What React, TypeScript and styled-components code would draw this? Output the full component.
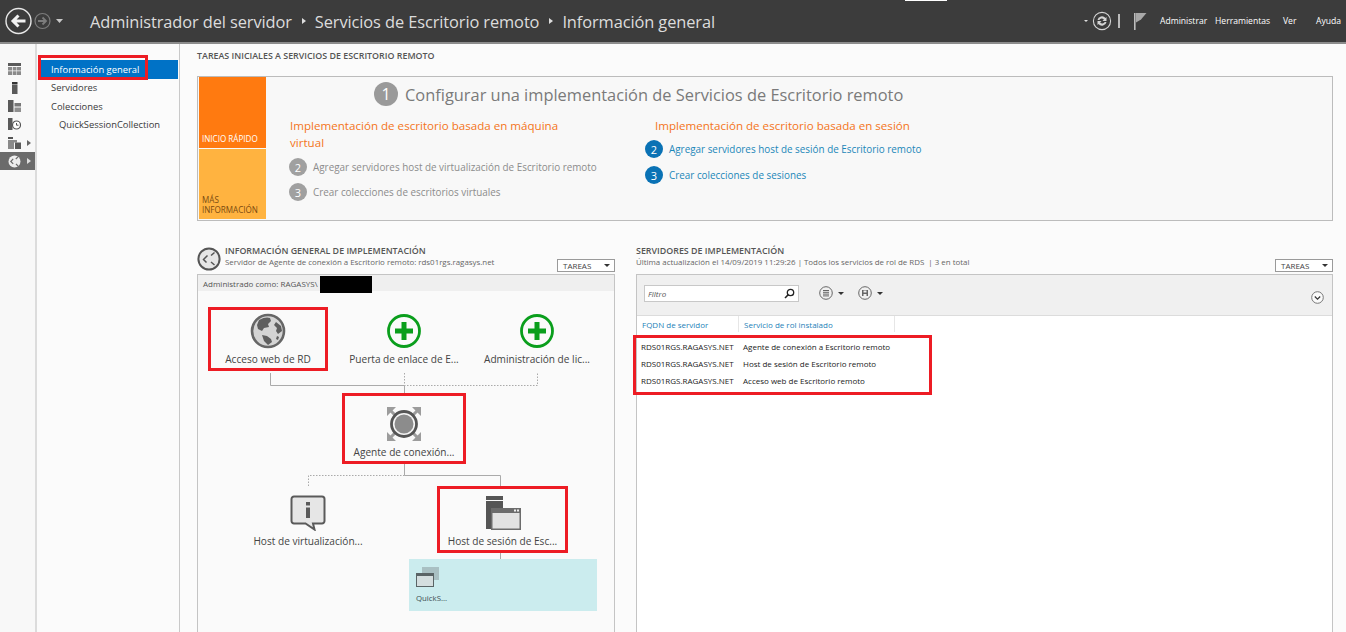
import React from "react";
import styled, { createGlobalStyle } from "styled-components";

const Global = createGlobalStyle`
  html, body { margin: 0; padding: 0; width: 1346px; height: 632px; overflow: hidden; background: #fff; }
  * { box-sizing: border-box; }
  body { font-family: "Open Sans", "Noto Sans", "Liberation Sans", sans-serif; color: #333; }
`;

const Page = styled.div`
  width: 1346px; height: 632px; display: flex; flex-direction: column; overflow: hidden; position: relative;
`;
const Header = styled.header`
  height: 44px; flex: none; background: #3c3c3c; border-bottom: 2px solid #8c8c8c;
  display: flex; align-items: center; color: #fff; position: relative;
`;
const TopNotch = styled.div`
  position: absolute; left: 905px; top: 0; width: 42px; height: 1px; background: #fff;
`;
const NavGroup = styled.div`
  display: flex; align-items: center; width: 90px; flex: none; padding-left: 5px;
`;
const Crumbs = styled.div`
  display: flex; align-items: center; flex: 1; font-size: 16.4px; color: #dcdcdc; letter-spacing: -0.1px; white-space: nowrap;
`;
const CrumbSep = styled.span`
  width: 0; height: 0; border-left: 4px solid #ddd; border-top: 3px solid transparent; border-bottom: 3px solid transparent;
  margin: 0 9px 0 10px;
`;
const HeaderTools = styled.div`
  display: flex; align-items: center; flex: none; width: 262px; height: 100%;
`;
const MenuItem = styled.span<{ $w: number }>`
  font-size: 8.6px; color: #fff; width: ${p => p.$w}px; white-space: nowrap;
`;
const Caret = styled.span<{ $c?: string; $s?: number }>`
  display: inline-block; width: 0; height: 0;
  border-left: ${p => p.$s ?? 4}px solid transparent; border-right: ${p => p.$s ?? 4}px solid transparent;
  border-top: ${p => p.$s ?? 4}px solid ${p => p.$c ?? "#333"};
`;
const Body = styled.div`
  flex: 1; display: flex; min-height: 0; background: #fbfbfb;
`;
const Rail = styled.aside`
  width: 37px; flex: none; background: #f8f8f8; border-right: 2px solid #dcdcdc; padding-top: 16px;
`;
const RailItem = styled.div<{ $active?: boolean; $arrow?: boolean }>`
  height: 18.4px; display: flex; align-items: center; padding-left: 8px; gap: 6px;
  background: ${p => (p.$active ? "#6b6b6b" : "transparent")};
`;
const RailArrow = styled.span<{ $c: string }>`
  width: 0; height: 0; border-left: 4px solid ${p => p.$c}; border-top: 3.5px solid transparent; border-bottom: 3.5px solid transparent;
`;
const SideNav = styled.nav`
  width: 143px; flex: none; background: #fbfbfb; border-right: 1px solid #c9c9c9; padding-top: 16px; font-size: 9.4px; color: #3a3a3a;
`;
const NavItem = styled.div<{ $active?: boolean; $indent?: boolean }>`
  height: 18.5px; display: flex; align-items: center; white-space: nowrap; margin-right: 1px; margin-left: 1px;
  padding-left: ${p => (p.$indent ? "21px" : "13px")};
  background: ${p => (p.$active ? "#0072c6" : "transparent")};
  color: ${p => (p.$active ? "#fff" : "#3a3a3a")};
`;
const NavMark = styled.div`
  position: absolute; left: 38px; top: 55px; width: 110px; height: 25px; border: 3px solid #ed1c24;
`;
const Main = styled.main`
  flex: 1; padding: 6px 13px 0 17px; display: flex; flex-direction: column; min-width: 0; background: #fbfbfb;
`;
const SectionTitle = styled.h2`
  margin: 0; font-size: 8.9px; font-weight: 600; color: #555; line-height: 12px; white-space: nowrap; letter-spacing: 0;
`;
const QuickStart = styled.section`
  margin-top: 14px; height: 145px; border: 1px solid #bcbcbc; background: #f8f8f8; display: flex; flex: none;
`;
const Tiles = styled.div`
  width: 68px; flex: none; display: flex; flex-direction: column; gap: 1px; padding-left: 1px;
`;
const Tile = styled.div<{ $bg: string; $c: string; $h: number }>`
  height: ${p => p.$h}px; background: ${p => p.$bg}; color: ${p => p.$c}; font-size: 8.1px; line-height: 10px;
  display: flex; align-items: flex-end; padding: 0 3px 4px 3px;
`;
const QuickBody = styled.div`
  flex: 1; padding-top: 5px; min-width: 0;
`;
const BigStep = styled.div`
  display: flex; align-items: center; gap: 7px; margin-left: 108px; height: 24px;
  font-size: 16.4px; color: #7a7a7a; white-space: nowrap;
`;
const Bullet = styled.span<{ $bg: string; $size: number; $fs: number }>`
  width: ${p => p.$size}px; height: ${p => p.$size}px; border-radius: 50%; background: ${p => p.$bg}; color: #fff;
  font-size: ${p => p.$fs}px; display: flex; align-items: center; justify-content: center; flex: none;
`;
const Cols = styled.div`
  display: flex; margin-top: 11px; padding-left: 24px;
`;
const Col = styled.div<{ $w: number }>`
  width: ${p => p.$w}px; flex: none;
`;
const ColTitle = styled.div<{ $h?: number }>`
  color: #f47521; font-size: 11.6px; line-height: 17px; height: ${p => p.$h ?? 17}px; width: 300px;
`;
const Step = styled.div<{ $mt: number; $link?: boolean; $ml?: number }>`
  display: flex; align-items: center; gap: 6px; margin-top: ${p => p.$mt}px; margin-left: ${p => p.$ml ?? -1}px; height: 18px;
  font-size: 9.9px; color: ${p => (p.$link ? "#1b87b8" : "#8c8c8c")}; white-space: nowrap;
`;
const Lower = styled.div`
  margin-top: 23px; display: grid; grid-template-columns: 418px 697px; column-gap: 21px; flex: 1; min-height: 0;
`;
const Panel = styled.section`
  display: flex; flex-direction: column; min-height: 0;
`;
const PanelHead = styled.div`
  height: 30px; flex: none; display: flex; align-items: flex-start; position: relative;
`;
const HeadIcon = styled.div`
  width: 28px; flex: none; padding-top: 3px;
`;
const HeadText = styled.div`
  flex: 1; padding-top: 1px;
`;
const Sub = styled.div`
  font-size: 7.9px; line-height: 11px; color: #666; white-space: nowrap;
`;
const TaskButton = styled.div`
  position: absolute; right: 0; top: 15px; width: 58px; height: 13px; border: 1px solid #9a9a9a; background: #fff;
  font-size: 8px; color: #444; display: flex; align-items: center; justify-content: space-between; padding: 0 4px 0 5px;
`;
const Frame = styled.div`
  flex: 1; border: 1px solid #c4c4c4; border-bottom: none; background: #fafafa; position: relative; min-height: 0;
`;
const ManagedBar = styled.div`
  height: 16px; background: #efefef; font-size: 8px; color: #555; padding-left: 5px; display: flex; align-items: center;
`;
const Redact = styled.div`
  position: absolute; left: 122px; top: 1px; width: 52px; height: 17px; background: #000;
`;
const Connectors = styled.svg`
  position: absolute; left: 0; top: 0;
`;
const Node = styled.div<{ $x: number; $y: number; $w: number; $h: number; $mark?: boolean }>`
  position: absolute; left: ${p => p.$x}px; top: ${p => p.$y}px; width: ${p => p.$w}px; height: ${p => p.$h}px;
  border: 3px solid ${p => (p.$mark ? "#ed1c24" : "transparent")};
  display: flex; flex-direction: column; align-items: center; justify-content: flex-end;
  padding-bottom: 2px; font-size: 10.1px; color: #444; white-space: nowrap;
`;
const NodeIcon = styled.div`
  display: flex; justify-content: center; margin-bottom: 3px;
`;
const CollectionBox = styled.div`
  position: absolute; left: 211px; top: 284px; width: 188px; height: 52px; background: #cbecee; padding: 8px 0 0 7px;
  font-size: 7.8px; color: #3c4d52;
`;
const CollectionLabel = styled.div`
  margin-top: 4px;
`;
const FilterBar = styled.div`
  height: 41px; background: #f0f0f0; border-bottom: 1px solid #dcdcdc; display: flex; align-items: flex-start; padding: 10px 8px 0 7px; position: relative;
`;
const FilterBox = styled.div`
  width: 155px; height: 17px; background: #fff; border: 1px solid #c8c8c8; font-size: 8px; font-style: italic; color: #555;
  display: flex; align-items: center; justify-content: space-between; padding: 0 3px;
`;
const RoundMenu = styled.div<{ $ml: number }>`
  display: flex; align-items: center; gap: 5px; margin-left: ${p => p.$ml}px; margin-top: 1px;
`;
const ExpandBtn = styled.div`
  margin-left: auto; margin-top: 2px;
`;
const TableArea = styled.div`
  flex: 1; background: #fff; height: 100%; position: relative;
`;
const HeadRow = styled.div`
  display: flex; height: 16px; font-size: 8px; color: #1e7fb8; align-items: center;
`;
const HeadCell = styled.div<{ $w: number }>`
  width: ${p => p.$w}px; padding-left: 5px; border-right: 1px solid #e6e6e6; height: 100%; display: flex; align-items: center; white-space: nowrap;
`;
const Rows = styled.div`
  margin-top: 6px; margin-left: 4px; font-size: 8px; color: #222;
`;
const Row = styled.div`
  display: flex; height: 17px; align-items: center; white-space: nowrap;
`;
const FqdnCell = styled.div`
  width: 102px; flex: none;
`;
const RowsMark = styled.div`
  position: absolute; left: -4px; top: 19px; width: 299px; height: 60px; border: 3px solid #ed1c24;
`;

const BackIcon = () => (
  <svg width="62" height="32" viewBox="0 0 62 32">
    <circle cx="13.5" cy="16" r="12.5" fill="none" stroke="#e8e8e8" strokeWidth="1.4" />
    <path d="M20.5 16H9M13.5 10.5 8 16l5.5 5.5" fill="none" stroke="#f2f2f2" strokeWidth="3" />
    <circle cx="37.5" cy="16" r="7.5" fill="none" stroke="#7c7c7c" strokeWidth="1.2" />
    <path d="M33 16h7.5M37.5 12.5 41 16l-3.5 3.5" fill="none" stroke="#7c7c7c" strokeWidth="1.8" />
    <path d="M51 14h7l-3.5 4z" fill="#c8c8c8" />
  </svg>
);
const RefreshIcon = () => (
  <svg width="20" height="20" viewBox="0 0 20 20">
    <circle cx="10" cy="10" r="8.6" fill="none" stroke="#d4d4d4" strokeWidth="1.1" />
    <path d="M5.5 9a4.5 4.5 0 0 1 8-2l1-1v4h-4l1.4-1.4A2.8 2.8 0 0 0 7.3 9zM14.5 11a4.5 4.5 0 0 1-8 2l-1 1v-4h4L8.1 11.400a2.800 2.800 0 0 0 4.600 -.4z" fill="#d4d4d4" />
  </svg>
);
const FlagIcon = () => (
  <svg width="14" height="19" viewBox="0 0 14 19">
    <path d="M1 1h1.600v17H1z" fill="#bdbdbd" />
    <path d="M3 1h10.500L8 7.500l-5 3z" fill="#a8a8a8" />
  </svg>
);

const railColor = "#5a5a5a";
const RailDash = () => (
  <svg width="13" height="12" viewBox="0 0 13 12"><path d="M0 0h13v3H0z" fill={railColor} /><path d="M0 4h4v3.500H0zM4.700 4h3.800v3.500H4.700zM9 4h4v3.500H9zM0 8.200h4V12H0zM4.700 8.200h3.800V12H4.700zM9 8.200h4V12H9z" fill="#8a8a8a" /></svg>
);
const RailServer = () => (
  <svg width="13" height="12" viewBox="0 0 13 12"><path d="M4 0h5.500v2.500H4z" fill="#333" /><path d="M4 3h5.500v9H4z" fill={railColor} /></svg>
);
const RailRoles = () => (
  <svg width="13" height="12" viewBox="0 0 13 12"><path d="M0 0h5.500v12H0z" fill={railColor} /><path d="M6.500 3H13v3.500H6.500z" fill="#777" /><path d="M6.500 7.500H13V12H6.500z" fill="#8f8f8f" /></svg>
);
const RailClock = () => (
  <svg width="13" height="12" viewBox="0 0 13 12"><path d="M0 0h4.500v12H0z" fill={railColor} /><circle cx="8.500" cy="7" r="4" fill="#fff" stroke="#555" strokeWidth="1.200" /><path d="M8.500 5v2.200h2" stroke="#555" fill="none" /></svg>
);
const RailFiles = () => (
  <svg width="13" height="12" viewBox="0 0 13 12"><path d="M0 0h5v2H0z" fill="#555" /><path d="M0 3h9v2.500H6V12H0z" fill="#8a8a8a" /><path d="M7 5.500h6V12H7z" fill={railColor} /></svg>
);
const RailRemote = () => (
  <svg width="13" height="13" viewBox="0 0 13 13">
    <circle cx="6.500" cy="6.500" r="6" fill="#ededed" />
    <path d="M5.200 3.800 2.800 6.500l2.400 2.400M7.800 4 10 1.800M8 9l2.200 2.200" fill="none" stroke="#6b6b6b" strokeWidth="1.200" />
  </svg>
);
const RemoteHead = () => (
  <svg width="24" height="24" viewBox="0 0 24 24">
    <circle cx="12" cy="12" r="10.600" fill="#e6e6e6" stroke="#555" strokeWidth="2" />
    <path d="M10.500 8.500 6.500 12.500l3 3M14 8.500l3.500-3M14 15l3.500 3" fill="none" stroke="#555" strokeWidth="1.500" />
  </svg>
);
const GlobeIcon = () => (
  <svg width="36" height="36" viewBox="0 0 36 36">
    <circle cx="18" cy="18" r="16" fill="#d4d4d4" stroke="#666" strokeWidth="2.600" />
    <path d="M9 7c5-3 9-3 11-2l1 3-3 3 1 3-5 1-2 3-4-2-1-4zM12 22l5 1 4 3 1 3-4 3-4-4zM26 9l5 4 1 5-4 3-2-3 1-3-3-3zM27 23l2 1-1 3-2-1z" fill="#5e5e5e" />
  </svg>
);
const PlusIcon = () => (
  <svg width="36" height="36" viewBox="0 0 36 36">
    <circle cx="18" cy="18" r="15.500" fill="#fafafa" stroke="#0a9e1c" strokeWidth="2.800" />
    <path d="M15.500 9h5v6.500H27v5h-6.500V27h-5v-6.500H9v-5h6.500z" fill="#0a9e1c" />
  </svg>
);
const BrokerIcon = () => (
  <svg width="36" height="36" viewBox="0 0 36 36">
    <path d="M1 1h9L1 10zM35 1v9l-9-9zM1 35v-9l9 9zM35 35h-9l9-9z" fill="#9c9c9c" />
    <path d="M4 4l6 6M32 4l-6 6M4 32l6-6M32 32l-6-6" stroke="#9c9c9c" strokeWidth="3" />
    <circle cx="18" cy="18" r="12.500" fill="#f5f5f5" stroke="#555" strokeWidth="2.800" />
    <circle cx="18" cy="18" r="9.500" fill="#8c8c8c" />
  </svg>
);
const InfoIcon = () => (
  <svg width="36" height="36" viewBox="0 0 36 36">
    <path d="M4 1.500h28a2.500 2.500 0 0 1 2.500 2.500v22a2.500 2.500 0 0 1-2.500 2.500h-9l1.500 6-9-6H4A2.500 2.500 0 0 1 1.500 26V4A2.500 2.500 0 0 1 4 1.500z" fill="#e6e6e6" stroke="#5a5a5a" strokeWidth="2" />
    <path d="M16 7h4v3.500h-4zM16 12.500h4V23h-4z" fill="#5a5a5a" />
  </svg>
);
const SessionIcon = () => (
  <svg width="36" height="36" viewBox="0 0 36 36">
    <path d="M1 1h17v4H1zM1 6h17v7H6.500v21H1z" fill="#555" />
    <path d="M6 13h30v22H6z" fill="#6c6c6c" />
    <path d="M7.500 18H34.500v15.500H7.500z" fill="#e2e2e2" />
    <path d="M29 14.500h2v2h-2zM32 14.500h2v2h-2z" fill="#eee" />
  </svg>
);
const CollectionIcon = () => (
  <svg width="24" height="20" viewBox="0 0 24 20">
    <path d="M6 0h17v13H6z" fill="#a9c0c3" />
    <path d="M0 6h18v14H0z" fill="#5a6466" />
    <path d="M1 9h16v10H1z" fill="#d4dedf" />
  </svg>
);
const SearchIcon = () => (
  <svg width="11" height="11" viewBox="0 0 11 11"><circle cx="6.500" cy="4.500" r="3.200" fill="none" stroke="#222" strokeWidth="1.300" /><path d="M4.200 6.800 1 10" stroke="#222" strokeWidth="1.600" /></svg>
);
const ListBtn = () => (
  <svg width="14" height="14" viewBox="0 0 14 14"><circle cx="7" cy="7" r="6.300" fill="none" stroke="#666" /><path d="M4 4.500h6M4 6.300h6M4 8.100h6M4 9.900h6" stroke="#666" /></svg>
);
const SaveBtn = () => (
  <svg width="14" height="14" viewBox="0 0 14 14"><circle cx="7" cy="7" r="6.300" fill="none" stroke="#666" /><path d="M4 4h6v6H4z" fill="#666" /><path d="M5.500 4.500h3v2h-3zM5.500 8h3v2h-3z" fill="#f0f0f0" /></svg>
);
const ExpandIcon = () => (
  <svg width="13" height="13" viewBox="0 0 13 13"><circle cx="6.500" cy="6.500" r="5.800" fill="#fafafa" stroke="#777" /><path d="M3.800 5.500 6.500 8.200l2.700-2.700" fill="none" stroke="#333" strokeWidth="1.200" /></svg>
);

const nodes = [
  { x: 10, y: 32, w: 120, h: 64, mark: true, label: "Acceso web de RD", icon: <GlobeIcon /> },
  { x: 146, y: 32, w: 120, h: 64, label: "Puerta de enlace de E...", icon: <PlusIcon /> },
  { x: 279, y: 32, w: 120, h: 64, label: "Administración de lic...", icon: <PlusIcon /> },
  { x: 144, y: 118, w: 124, h: 71, mark: true, label: "Agente de conexión...", icon: <BrokerIcon /> },
  { x: 50, y: 211, w: 120, h: 67, label: "Host de virtualización...", icon: <InfoIcon /> },
  { x: 239, y: 211, w: 131, h: 67, mark: true, label: "Host de sesión de Esc...", icon: <SessionIcon /> },
];

export default function App() {
  return (
    <Page>
      <Global />
      <Header>
        <TopNotch />
        <NavGroup><BackIcon /></NavGroup>
        <Crumbs>
          <span>Administrador del servidor</span><CrumbSep />
          <span>Servicios de Escritorio remoto</span><CrumbSep />
          <span>Información general</span>
        </Crumbs>
        <HeaderTools>
          <Caret $c="#ddd" $s={2.5} />
          <span style={{ width: 4 }} />
          <RefreshIcon />
          <span style={{ width: 6 }} />
          <svg width="2" height="14"><path d="M0 0h2v14H0z" fill="#bbb" /></svg>
          <span style={{ width: 13 }} />
          <FlagIcon />
          <span style={{ width: 13 }} />
          <MenuItem $w={55}>Administrar</MenuItem>
          <MenuItem $w={68}>Herramientas</MenuItem>
          <MenuItem $w={33}>Ver</MenuItem>
          <MenuItem $w={24}>Ayuda</MenuItem>
        </HeaderTools>
      </Header>
      <Body>
        <Rail>
          <RailItem><RailDash /></RailItem>
          <RailItem><RailServer /></RailItem>
          <RailItem><RailRoles /></RailItem>
          <RailItem><RailClock /></RailItem>
          <RailItem><RailFiles /><RailArrow $c="#666" /></RailItem>
          <RailItem $active><RailRemote /><RailArrow $c="#ddd" /></RailItem>
        </Rail>
        <SideNav>
          <NavItem $active>Información general</NavItem>
          <NavItem>Servidores</NavItem>
          <NavItem>Colecciones</NavItem>
          <NavItem $indent>QuickSessionCollection</NavItem>
        </SideNav>
        <NavMark />
        <Main>
          <SectionTitle>TAREAS INICIALES A SERVICIOS DE ESCRITORIO REMOTO</SectionTitle>
          <QuickStart>
            <Tiles>
              <Tile $bg="#ff7a10" $c="#fff" $h={71}>INICIO RÁPIDO</Tile>
              <Tile $bg="#ffb340" $c="#7a4a10" $h={70}>MÁS INFORMACIÓN</Tile>
            </Tiles>
            <QuickBody>
              <BigStep><Bullet $bg="#9a9a9a" $size={24} $fs={16}>1</Bullet>Configurar una implementación de Servicios de Escritorio remoto</BigStep>
              <Cols>
                <Col $w={365}>
                  <ColTitle $h={34}>Implementación de escritorio basada en máquina virtual</ColTitle>
                  <Step $mt={7}><Bullet $bg="#a0a0a0" $size={18} $fs={11}>2</Bullet>Agregar servidores host de virtualización de Escritorio remoto</Step>
                  <Step $mt={7}><Bullet $bg="#a0a0a0" $size={18} $fs={11}>3</Bullet>Crear colecciones de escritorios virtuales</Step>
                </Col>
                <Col $w={400}>
                  <ColTitle>Implementación de escritorio basada en sesión</ColTitle>
                  <Step $mt={6} $link $ml={-10}><Bullet $bg="#0a72b5" $size={18} $fs={11}>2</Bullet>Agregar servidores host de sesión de Escritorio remoto</Step>
                  <Step $mt={8} $link $ml={-10}><Bullet $bg="#0a72b5" $size={18} $fs={11}>3</Bullet>Crear colecciones de sesiones</Step>
                </Col>
              </Cols>
            </QuickBody>
          </QuickStart>
          <Lower>
            <Panel>
              <PanelHead>
                <HeadIcon><RemoteHead /></HeadIcon>
                <HeadText>
                  <SectionTitle>INFORMACIÓN GENERAL DE IMPLEMENTACIÓN</SectionTitle>
                  <Sub>Servidor de Agente de conexión a Escritorio remoto: rds01rgs.ragasys.net</Sub>
                </HeadText>
                <TaskButton>TAREAS <Caret $s={3.5} /></TaskButton>
              </PanelHead>
              <Frame>
                <ManagedBar>Administrado como: RAGASYS\</ManagedBar>
                <Redact />
                <Connectors width="416" height="359" viewBox="0 0 416 359">
                  <path d="M72.500 98v12.500H206.500V118" fill="none" stroke="#aaa" />
                  <path d="M206.500 98v12.500H339.500V98" fill="none" stroke="#aaa" strokeDasharray="1.500 1.500" />
                  <path d="M206.500 189v11.500H302.500V211" fill="none" stroke="#aaa" />
                  <path d="M206.500 200.500H110.500V212" fill="none" stroke="#aaa" strokeDasharray="1.500 1.500" />
                  <path d="M302.500 278v6" fill="none" stroke="#aaa" />
                </Connectors>
                {nodes.map(n => (
                  <Node key={n.label} $x={n.x} $y={n.y} $w={n.w} $h={n.h} $mark={n.mark}>
                    <NodeIcon>{n.icon}</NodeIcon>
                    {n.label}
                  </Node>
                ))}
                <CollectionBox>
                  <CollectionIcon />
                  <CollectionLabel>QuickS...</CollectionLabel>
                </CollectionBox>
              </Frame>
            </Panel>
            <Panel>
              <PanelHead>
                <HeadText>
                  <SectionTitle>SERVIDORES DE IMPLEMENTACIÓN</SectionTitle>
                  <Sub>Última actualización el 14/09/2019 11:29:26 | Todos los servicios de rol de RDS &nbsp;| 3 en total</Sub>
                </HeadText>
                <TaskButton>TAREAS <Caret $s={3.5} /></TaskButton>
              </PanelHead>
              <Frame>
                <FilterBar>
                  <FilterBox>Filtro <SearchIcon /></FilterBox>
                  <RoundMenu $ml={20}><ListBtn /><Caret $s={3.5} /></RoundMenu>
                  <RoundMenu $ml={14}><SaveBtn /><Caret $s={3.5} /></RoundMenu>
                  <ExpandBtn><ExpandIcon /></ExpandBtn>
                </FilterBar>
                <TableArea>
                  <HeadRow>
                    <HeadCell $w={102}>FQDN de servidor</HeadCell>
                    <HeadCell $w={156}>Servicio de rol instalado</HeadCell>
                  </HeadRow>
                  <Rows>
                    <Row><FqdnCell>RDS01RGS.RAGASYS.NET</FqdnCell>Agente de conexión a Escritorio remoto</Row>
                    <Row><FqdnCell>RDS01RGS.RAGASYS.NET</FqdnCell>Host de sesión de Escritorio remoto</Row>
                    <Row><FqdnCell>RDS01RGS.RAGASYS.NET</FqdnCell>Acceso web de Escritorio remoto</Row>
                  </Rows>
                  <RowsMark />
                </TableArea>
              </Frame>
            </Panel>
          </Lower>
        </Main>
      </Body>
    </Page>
  );
}
